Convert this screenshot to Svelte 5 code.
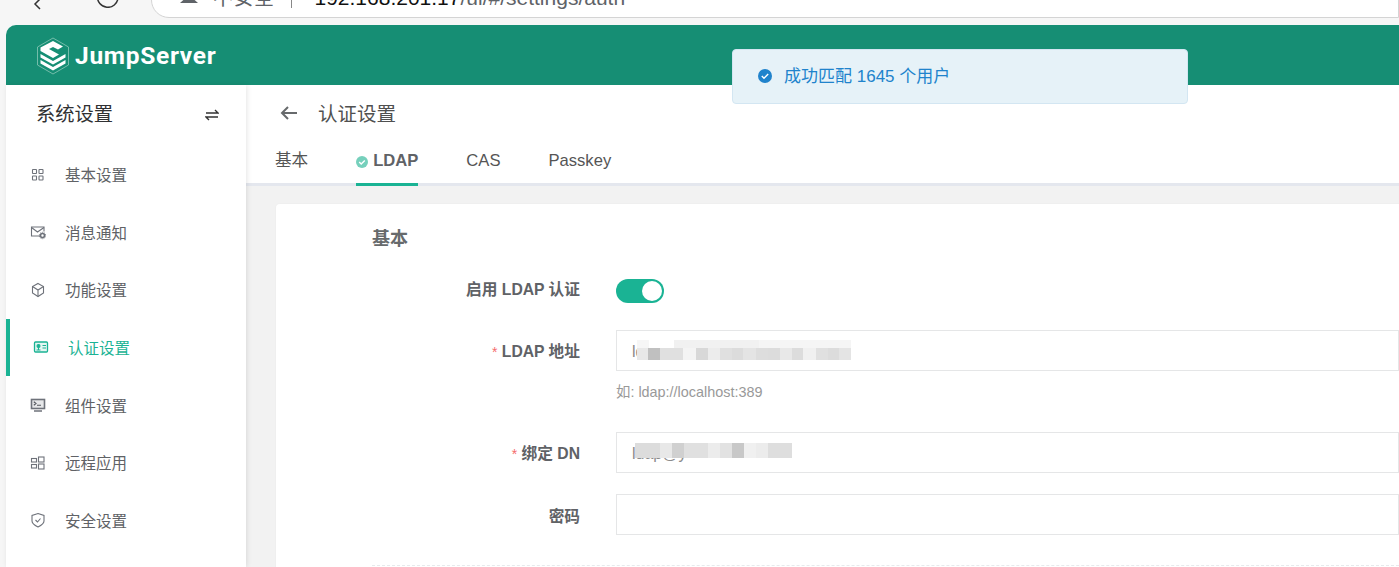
<script>
  const menu = [
    { label: '基本设置', icon: 'grid' },
    { label: '消息通知', icon: 'mail' },
    { label: '功能设置', icon: 'box' },
    { label: '认证设置', icon: 'card', active: true },
    { label: '组件设置', icon: 'term' },
    { label: '远程应用', icon: 'apps' },
    { label: '安全设置', icon: 'shield' }
  ];
  const top1 = [['#f6f6f6',12],['#ffffff',25],['#f1f1f1',85],['#f5f5f5',92]];
  const blur1 = [['#e8e8e8',11],['#c0c0c0',12],['#e0e0e0',23],['#f4f4f4',13],['#d8d8d8',12],['#ececec',12],['#e0e0e0',12],['#dcdcdc',11],['#e4e4e4',13],['#dddddd',12],['#dcdcdc',12],['#e8e8e8',12],['#dcdcdc',11],['#f0f0f0',13],['#e0e0e0',12],['#dcdcdc',11],['#e4e4e4',12]];
  const blur2 = [['#dcdcdc',25],['#e8e8e8',12],['#d0d0d0',12],['#e0e0e0',24],['#ececec',12],['#e2e2e2',12],['#c8c8c8',12],['#f0f0f0',12],['#ececec',12],['#dedede',24]];
</script>

<div class="page">
  <div class="chrome">
    <svg class="nav-back" width="16" height="12" viewBox="0 0 16 12"><path d="M12 -3 L5 4 L10 9" fill="none" stroke="#333" stroke-width="1.5"/></svg>
    <svg class="nav-reload" width="24" height="8" viewBox="0 0 24 8"><path d="M1.500 -4 A10 10 0 0 0 22 -2" fill="none" stroke="#333" stroke-width="1.5"/></svg>
    <div class="urlbar">
      <svg class="warn" width="20" height="8" viewBox="0 0 20 8"><path d="M10 -5 L19 3 H1 Z" fill="#5f6368"/></svg>
      <span class="insecure">不安全</span>
      <span class="sep"></span>
      <span class="url">192.168.201.17<span class="path">/ui/#/settings/auth</span></span>
    </div>
  </div>

  <div class="window">
    <header class="topbar">
      <svg class="logo" width="34" height="38" viewBox="0 0 34 38">
        <path d="M17 1 L32.500 10 V28 L17 37 L1.500 28 V10 Z" fill="none" stroke="#8cc8b8" stroke-width="0.8"/>
        <path d="M17 4 L27 9.500 L22 12.500 L17 10 L13 12 L23 17.500 L17 21 L4.500 14 V10.500 Z" fill="#fff"/>
        <path d="M4.500 17 L17 24 L29.500 17 V20.500 L17 27.500 L4.500 20.500 Z" fill="#fff"/>
        <path d="M4.500 23 L17 30 L29.500 23 V26.500 L17 33.500 L4.500 26.500 Z" fill="#fff"/>
      </svg>
      <span class="brand">JumpServer</span>
    </header>
    <div class="body">
      <aside class="side">
        <div class="side-title">
          <span>系统设置</span>
          <svg width="14" height="12" viewBox="0 0 14 12"><path d="M1 4 H13 L10 1 M13 8 H1 L4 11" fill="none" stroke="#333" stroke-width="1.400"/></svg>
        </div>
        <nav class="menu">
          {#each menu as m}
            <div class="item" class:active={m.active}>
              <svg class="mi" width="16" height="16" viewBox="0 0 16 16" fill="none" stroke={m.active ? '#1ab394' : '#6e727a'} stroke-width="1.100">
                {#if m.icon === 'grid'}
                  <rect x="2.500" y="2.500" width="4" height="4" rx=".5"/><rect x="9" y="2.500" width="4" height="4" rx=".5"/><rect x="2.500" y="9" width="4" height="4" rx=".5"/><rect x="9" y="9" width="4" height="4" rx=".5"/>
                {:else if m.icon === 'mail'}
                  <path d="M10 12 H1.500 V3 H14 V7.500"/><path d="M1.500 3.500 L7.500 8 L14 3.500"/><circle cx="12.500" cy="11.500" r="2" fill="#fff" stroke-width="1.600"/><circle cx="12.500" cy="11.500" r="3.200" stroke-width="1" stroke-dasharray="1 1"/>
                {:else if m.icon === 'box'}
                  <path d="M8 1.500 L13.500 4.500 V11 L8 14.500 L2.500 11 V4.500 Z"/><path d="M2.500 4.500 L8 8 L13.500 4.500 M8 8 V14.500"/>
                {:else if m.icon === 'card'}
                  <rect x="1.500" y="3" width="13" height="10" rx="1" fill="#e4f6f2" stroke-width="1.300"/><circle cx="5.500" cy="7" r="1.500" fill="#1ab394"/><path d="M3.500 11 H7.500 M5.500 8 V11 M9.500 6.500 H13 M9.500 9 H13"/>
                {:else if m.icon === 'term'}
                  <rect x="1.500" y="2.500" width="13" height="9" fill="#e6e7e9" stroke="#6e727a" stroke-width="1.600"/><path d="M3.800 4.800 L6 6.500 L3.800 8.200 M7 8.200 H11" stroke="#55585e"/><path d="M4 14 H12" stroke-width="1.500"/>
                {:else if m.icon === 'apps'}
                  <rect x="1.500" y="3.500" width="5" height="3.500"/><rect x="1.500" y="9.500" width="5" height="3.500"/><rect x="8.500" y="2" width="5.500" height="5"/><rect x="8.500" y="9" width="5.500" height="5"/>
                {:else}
                  <path d="M8 1.500 L14 3.500 V9 C14 12 11 13.500 8 15 C5 13.500 2 12 2 9 V3.500 Z"/><path d="M5.500 8 L7.500 10 L10.500 6.500"/>
                {/if}
              </svg>
              <span class="it">{m.label}</span>
            </div>
          {/each}
        </nav>
      </aside>

      <main class="main">
        <div class="head">
          <div class="crumb">
            <svg width="18" height="16" viewBox="0 0 18 16"><path d="M17 8 H2 M8 2 L2 8 L8 14" fill="none" stroke="#676a6c" stroke-width="2"/></svg>
            <span>认证设置</span>
          </div>
          <div class="tabs">
            <div class="tab">基本</div>
            <div class="tab on">
              <svg width="12" height="12" viewBox="0 0 12 12"><circle cx="6" cy="6" r="6" fill="#76d0bc"/><path d="M3.200 6 L5.200 8 L8.800 4.400" fill="none" stroke="#fff" stroke-width="1.400"/></svg>
              <span>LDAP</span>
            </div>
            <div class="tab">CAS</div>
            <div class="tab">Passkey</div>
          </div>
        </div>
        <div class="content">
          <section class="card">
            <h3>基本</h3>
            <div class="row first">
              <span class="lab up">启用 LDAP 认证</span>
              <div class="switch"><i></i></div>
            </div>
            <div class="row addr">
              <span class="lab"><em>*</em> LDAP 地址</span>
              <div class="field">
                <span class="ghost">ldap://</span>
                <div class="mosaic">
                  <div class="strip">{#each top1 as [c, w]}<b style="background:{c};width:{w}px"></b>{/each}</div>
                  <div class="cells">{#each blur1 as [c, w]}<b style="background:{c};width:{w}px"></b>{/each}</div>
                </div>
              </div>
            </div>
            <div class="hint">如: ldap://localhost:389</div>
            <div class="row dn">
              <span class="lab"><em>*</em> 绑定 DN</span>
              <div class="field">
                <span class="ghost">ldap@y</span>
                <div class="mosaic m2">
                  <div class="cells">{#each blur2 as [c, w]}<b style="background:{c};width:{w}px"></b>{/each}</div>
                </div>
              </div>
            </div>
            <div class="row pwd">
              <span class="lab down">密码</span>
              <div class="field"></div>
            </div>
            <div class="dash"></div>
          </section>
        </div>
      </main>
    </div>
  </div>

  <div class="toast">
    <svg width="14" height="14" viewBox="0 0 14 14"><circle cx="7" cy="7" r="7" fill="#2083cc"/><path d="M3.800 7 L6 9.200 L10.200 5" fill="none" stroke="#fff" stroke-width="1.400"/></svg>
    <span>成功匹配 1645 个用户</span>
  </div>
</div>

<style>
  :global(body) { margin: 0; background: #f6f6f6; overflow: hidden; }
  .page {
    position: relative; width: 1399px; height: 567px; overflow: hidden;
    font-family: "Liberation Sans", "Noto Sans CJK SC", sans-serif; color: #606266;
  }
  .chrome { height: 25px; display: flex; align-items: flex-start; position: relative; overflow: hidden; }
  .nav-back { margin-left: 30px; flex: none; }
  .nav-reload { margin-left: 50px; flex: none; }
  .urlbar {
    margin-left: 31px; margin-top: -18px; flex: 1; height: 36px; box-sizing: border-box;
    background: #fff; border: 1px solid #d4d4d4; border-radius: 18px 0 0 18px;
    display: flex; align-items: flex-end; padding: 0 0 9px 0;
    font-size: 21px; line-height: 20px; color: #111;
  }
  .warn { position: absolute; left: 179px; top: 0; }
  .insecure { color: #5f6368; margin-left: 61px; font-size: 20px; letter-spacing: .5px; }
  .sep { width: 1px; height: 18px; background: #888; margin: 0 23px 0 16px; }
  .path { color: #5f6368; }

  .window { margin-left: 6px; height: 542px; display: flex; flex-direction: column; }
  .topbar {
    height: 60px; flex: none; background: #168e74; border-top-left-radius: 10px;
    display: flex; align-items: center; padding-left: 30px;
  }
  .logo { flex: none; margin-top: 1px; }
  .brand {
    font-family: Roboto, sans-serif; font-weight: 700; font-size: 24.500px; color: #fff;
    margin-left: 5px; letter-spacing: .7px; line-height: 30px; transform: translateY(1px);
  }
  .body { flex: 1; display: flex; min-height: 0; }
  .side {
    width: 240px; flex: none; background: #fff; box-shadow: 1px 0 5px rgba(0,0,0,.1); position: relative; z-index: 1;
  }
  .side-title {
    height: 60px; display: flex; align-items: center; justify-content: space-between;
    padding: 0 27px 0 30px; font-size: 19.300px; color: #303133;
  }
  .side-title span { margin-top: -4px; }
  .menu { display: flex; flex-direction: column; margin-top: .7px; }
  .item {
    height: 57.670px; display: flex; align-items: center; padding-left: 24px; font-size: 15.500px; color: #606266; gap: 19px;
    box-sizing: border-box;
  }
  .item.active { color: #1ab394; border-left: 4px solid #1ab394; padding-left: 23px; }
  .mi { flex: none; }
  .it { margin-top: -1px; }
  .main { flex: 1; display: flex; flex-direction: column; min-width: 0; background: #f2f2f2; }
  .head { background: #fff; height: 101px; box-sizing: border-box; border-bottom: 3px solid #e4e7ee; flex: none; }
  .crumb {
    height: 57px; display: flex; align-items: center; gap: 19px; padding-left: 34px;
    font-size: 19.500px; color: #505050;
  }
  .crumb svg { margin-top: -1px; margin-right: 1px; }
  .crumb span { margin-top: -3px; }
  .tabs { display: flex; padding-left: 29px; gap: 48px; }
  .tab {
    height: 44px; box-sizing: border-box; padding-top: 9px; font-size: 16.600px; line-height: 20px; color: #555;
    display: flex; align-items: flex-start; gap: 5px;
  }
  .tab.on { font-weight: 700; color: #606266; border-bottom: 3px solid #1ab394; }
  .tab.on svg { margin-top: 5px; }
  .content { flex: 1; padding: 18px 0 0 30px; min-height: 0; overflow: hidden; }
  .card { background: #fff; border-radius: 4px 0 0 0; height: 400px; padding-left: 96px; box-shadow: 0 0 0 1px #efefef; }
  h3 { margin: 0; font-size: 18px; line-height: 24px; padding-top: 23px; color: #676a6c; font-weight: 700; }
  .row { display: flex; align-items: center; }
  .lab {
    width: 208px; flex: none; text-align: right; font-size: 15.700px; font-weight: 700; color: #606266; margin-right: 36px;
  }
  .lab.up { margin-top: -5px; }
  .lab.down { margin-top: 1px; }
  .lab em { color: #f56c6c; font-style: normal; font-weight: 400; font-size: 14px; }
  .first { margin-top: 28px; height: 24px; }
  .addr { margin-top: 27px; }
  .dn { margin-top: 32px; }
  .pwd { margin-top: 21px; }
  .switch { width: 48px; height: 24px; border-radius: 12px; background: #1ab394; position: relative; }
  .switch i { position: absolute; right: 2px; top: 2px; width: 20px; height: 20px; border-radius: 50%; background: #fff; }
  .field {
    flex: 1; height: 41px; box-sizing: border-box; border: 1px solid #e5e6e7; background: #fff;
    display: flex; align-items: center; padding-left: 15px; overflow: hidden; position: relative;
    font-size: 16px; color: #8b8b8b;
  }
  .ghost { position: relative; top: 1px; }
  .mosaic { position: absolute; left: 20px; top: 9px; display: flex; flex-direction: column; }
  .strip, .cells { display: flex; }
  .strip { height: 8px; }
  .cells { height: 12px; }
  .mosaic b { display: block; height: 100%; flex: none; }
  .m2 { left: 18px; top: 10px; }
  .m2 .cells { height: 15px; }
  .hint { margin: 13px 0 0 244px; font-size: 14.400px; line-height: 16px; color: #999; height: 16px; }
  .dash { margin-top: 30px; border-top: 1px dashed #e7eaec; }

  .toast {
    position: absolute; left: 732px; top: 49px; width: 456px; height: 55px; box-sizing: border-box;
    background: #e6f2f8; border: 1px solid #d3e6f2; border-radius: 4px;
    display: flex; align-items: center; gap: 12px; padding: 0 0 2px 25px; font-size: 17px; color: #2083cc;
  }
  .toast span { margin-top: -3px; }
</style>
